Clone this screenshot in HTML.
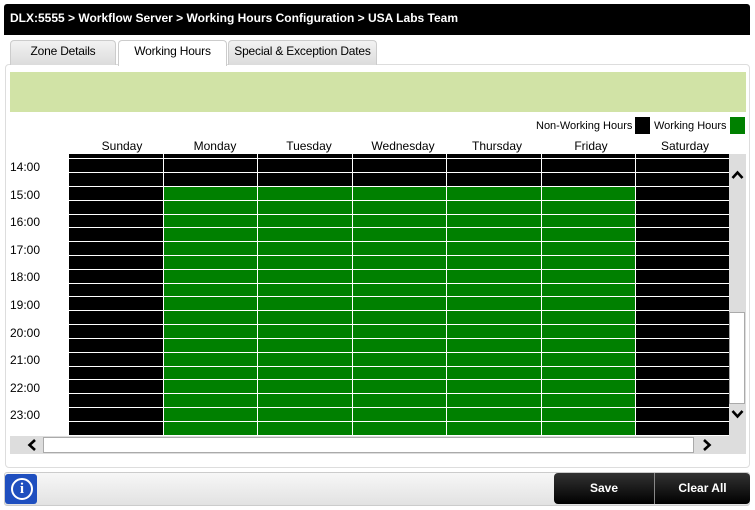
<!DOCTYPE html>
<html><head><style>
body{margin:0;width:755px;height:510px;background:#fff;font-family:"Liberation Sans",Arial,sans-serif;position:relative;overflow:hidden}
.a{position:absolute;white-space:nowrap}
.title{left:4px;top:4px;width:746px;height:31px;background:#000;border-radius:3px 3px 0 0;color:#fff;font-weight:bold;font-size:12px;line-height:28px;padding-left:6px;box-sizing:border-box}
.tab{top:40px;height:25px;background:linear-gradient(#f2f2f2,#dcdcdc);border:1px solid #ccc;border-bottom:none;border-radius:4px 4px 0 0;font-size:12px;text-align:center;line-height:21px;box-sizing:border-box;letter-spacing:-0.2px}
.panel{left:5px;top:64px;width:745px;height:404px;border:1px solid #ddd;border-radius:4px;box-sizing:border-box}
.day{top:139px;font-size:12px;text-align:center;width:94px}
.hr{left:10px;font-size:12px}
</style></head><body>
<div class="a title">DLX:5555 &gt; Workflow Server &gt; Working Hours Configuration &gt; USA Labs Team</div>
<div class="a panel"></div>
<div class="a tab" style="left:10px;width:106px">Zone Details</div>
<div class="a tab" style="left:118px;width:109px;background:#fff;height:26px">Working Hours</div>
<div class="a tab" style="left:228px;width:149px">Special &amp; Exception Dates</div>
<div class="a" style="left:10px;top:72px;width:736px;height:40px;background:#d1e3a6"></div>
<div class="a" style="left:536px;top:120px;font-size:11px">Non-Working Hours</div>
<div class="a" style="left:635px;top:117px;width:15px;height:17px;background:#000"></div>
<div class="a" style="left:654px;top:120px;font-size:11px">Working Hours</div>
<div class="a" style="left:730px;top:117px;width:15px;height:17px;background:#008000"></div>
<div class="a day" style="left:75px">Sunday</div>
<div class="a day" style="left:168px">Monday</div>
<div class="a day" style="left:262px">Tuesday</div>
<div class="a day" style="left:356px">Wednesday</div>
<div class="a day" style="left:450px">Thursday</div>
<div class="a day" style="left:544px">Friday</div>
<div class="a day" style="left:638px">Saturday</div>
<div class="a hr" style="top:160px">14:00</div>
<div class="a hr" style="top:188px">15:00</div>
<div class="a hr" style="top:215px">16:00</div>
<div class="a hr" style="top:243px">17:00</div>
<div class="a hr" style="top:270px">18:00</div>
<div class="a hr" style="top:298px">19:00</div>
<div class="a hr" style="top:326px">20:00</div>
<div class="a hr" style="top:353px">21:00</div>
<div class="a hr" style="top:381px">22:00</div>
<div class="a hr" style="top:408px">23:00</div>
<svg class="a" style="left:0;top:0" width="755" height="510" shape-rendering="crispEdges">
<rect x="69" y="154" width="660" height="281" fill="#000"/>
<rect x="163" y="187" width="473" height="248" fill="#008000"/>
<g fill="#fff">
<rect x="69" width="660" height="1" y="158"/><rect x="69" width="660" height="1" y="172"/><rect x="69" width="660" height="1" y="186"/><rect x="69" width="660" height="1" y="200"/><rect x="69" width="660" height="1" y="214"/><rect x="69" width="660" height="1" y="227"/><rect x="69" width="660" height="1" y="241"/><rect x="69" width="660" height="1" y="255"/><rect x="69" width="660" height="1" y="269"/><rect x="69" width="660" height="1" y="283"/><rect x="69" width="660" height="1" y="296"/><rect x="69" width="660" height="1" y="310"/><rect x="69" width="660" height="1" y="324"/><rect x="69" width="660" height="1" y="338"/><rect x="69" width="660" height="1" y="352"/><rect x="69" width="660" height="1" y="366"/><rect x="69" width="660" height="1" y="379"/><rect x="69" width="660" height="1" y="393"/><rect x="69" width="660" height="1" y="407"/><rect x="69" width="660" height="1" y="421"/>
<rect y="154" height="281" width="1" x="163"/><rect y="154" height="281" width="1" x="257"/><rect y="154" height="281" width="1" x="352"/><rect y="154" height="281" width="1" x="446"/><rect y="154" height="281" width="1" x="541"/><rect y="154" height="281" width="1" x="635"/>
</g>
<rect x="729" y="154" width="17" height="282" fill="#ddd"/>
<rect x="729.5" y="312.5" width="15" height="91" fill="#fff" stroke="#aaa"/>
<g shape-rendering="auto">
<path d="M732.5 178 L737.5 172.5 L742.5 178" fill="none" stroke="#000" stroke-width="2.6"/>
<path d="M732.5 411 L737.5 416.5 L742.5 411" fill="none" stroke="#000" stroke-width="2.6"/>
</g>
<rect x="10" y="436" width="736" height="18" fill="#ddd"/>
<rect x="43.5" y="437.5" width="650" height="15" fill="#fff" stroke="#aaa"/>
<g shape-rendering="auto">
<path d="M35 440 L29.5 445 L35 450" fill="none" stroke="#000" stroke-width="2.6"/>
<path d="M704 440 L709.5 445 L704 450" fill="none" stroke="#000" stroke-width="2.6"/>
</g>
</svg>
<div class="a" style="left:4px;top:472px;width:746px;height:34px;border:1px solid #ccc;border-radius:3px;background:linear-gradient(#f7f7f7,#e2e2e2);box-sizing:border-box"></div>
<div class="a" style="left:5px;top:474px;width:32px;height:30px;background:#1f4fbf;border-radius:3px"></div>
<div class="a" style="left:11px;top:478px;width:18px;height:18px;border:2px solid #fff;border-radius:50%;color:#fff;font:bold 15px 'Liberation Serif',serif;text-align:center;line-height:19px">i</div>
<div class="a" style="left:554px;top:473px;width:196px;height:31px;background:linear-gradient(#333,#000);border-radius:4px"></div>
<div class="a" style="left:654px;top:473px;width:1px;height:31px;background:#888"></div>
<div class="a" style="left:554px;top:481px;width:100px;text-align:center;color:#fff;font-weight:bold;font-size:12px">Save</div>
<div class="a" style="left:655px;top:481px;width:95px;text-align:center;color:#fff;font-weight:bold;font-size:12px">Clear All</div>
</body></html>
